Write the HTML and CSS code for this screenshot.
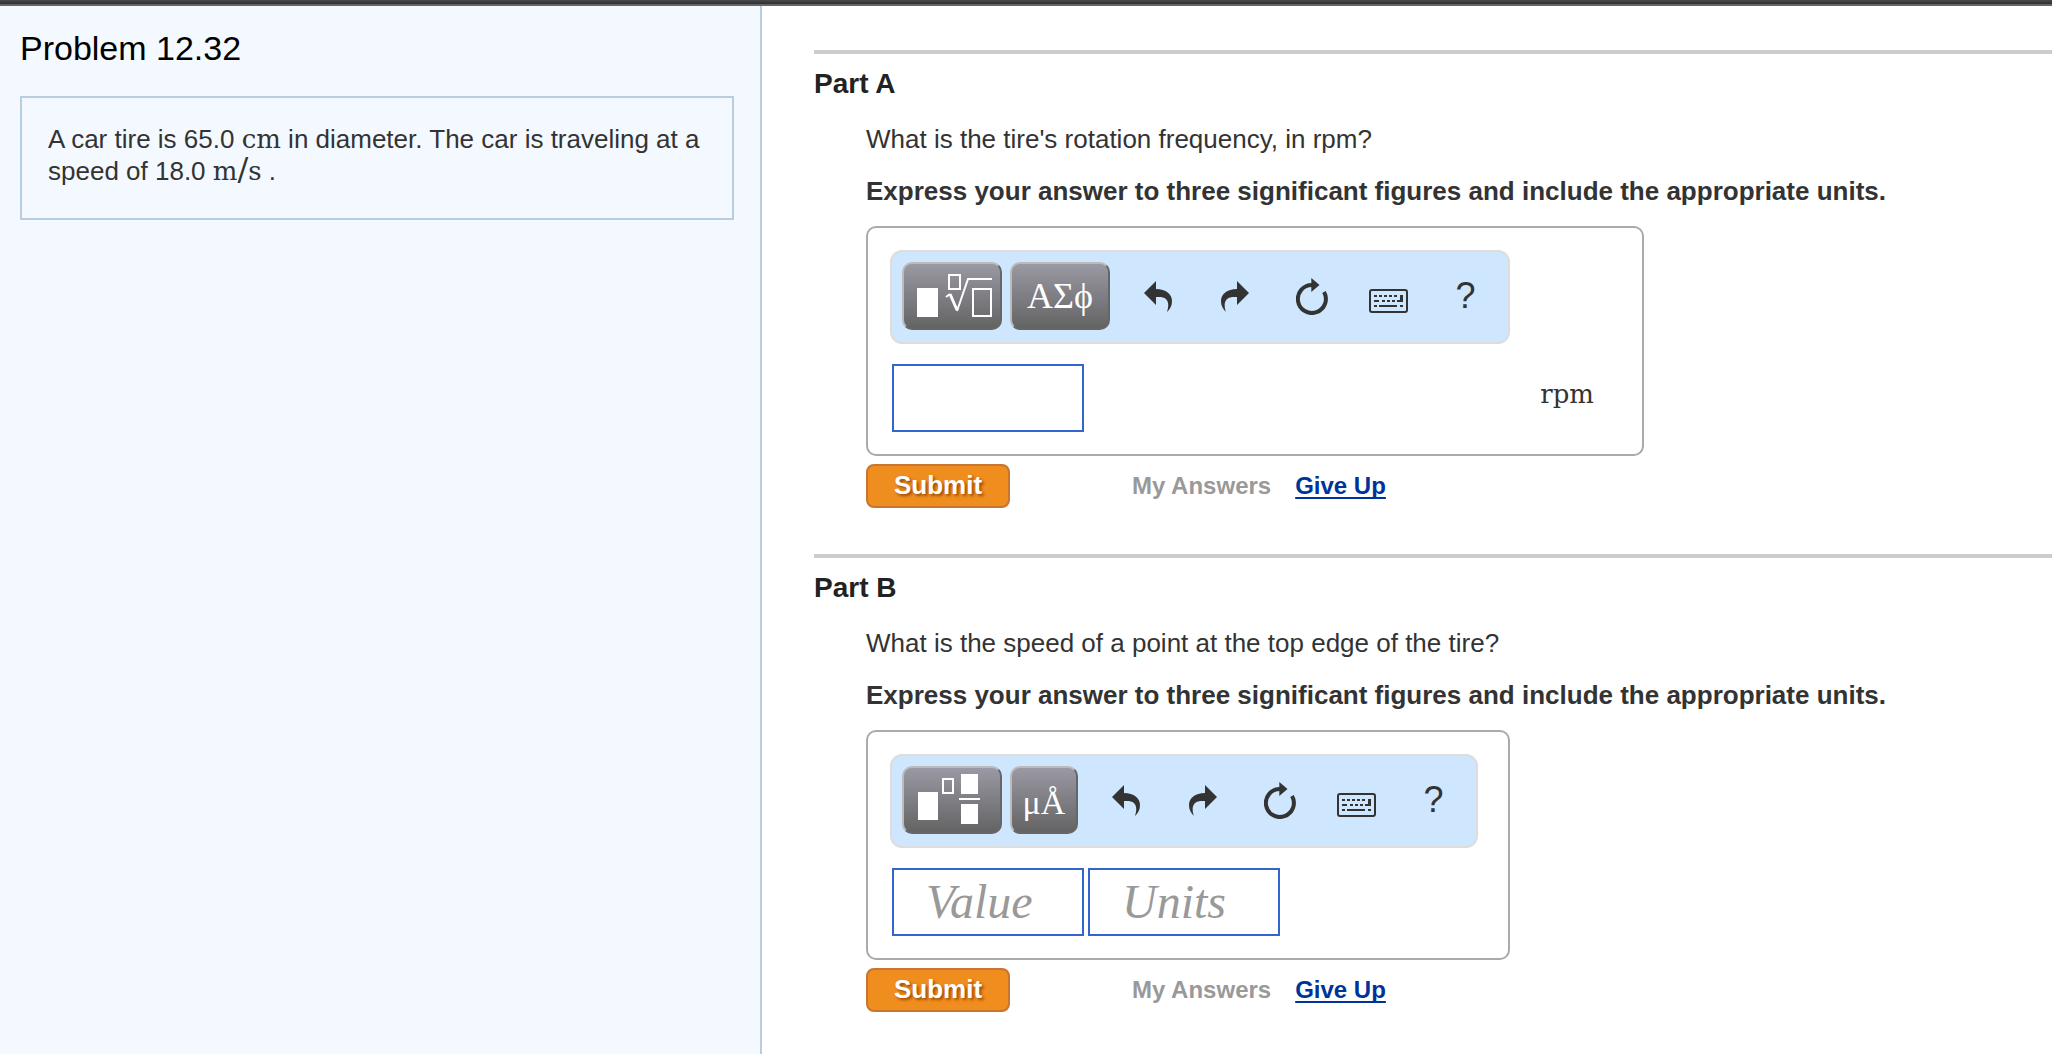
FILE: index.html
```html
<!doctype html>
<html lang="en">
<head>
    <meta charset="UTF-8">
    <meta name="viewport" content="width=device-width, initial-scale=1.0">
    <title>Problem 12.32</title>
    <link rel="stylesheet" href="styles.css">
</head>
<body>
<svg class="symbols" aria-hidden="true">
    <symbol id="undo" viewBox="0 0 28 31">
        <path d="M0 12 12 0V8C22 8 28 13 28 20C28 25 26 28 23 31C25 25 26 16 15 16H12V24Z"/>
    </symbol>
    <symbol id="redo" viewBox="0 0 28 31">
        <path d="M28 12 16 0V8C6 8 0 13 0 20C0 25 2 28 5 31C3 25 2 16 13 16H16V24Z"/>
    </symbol>
    <symbol id="reset" viewBox="0 0 32 37">
        <path d="M16 7A14 14 0 1 0 28 14" fill="none" stroke="currentColor" stroke-width="4"/>
        <path d="M15.3 0 23.5 7 15.3 14Z"/>
    </symbol>
    <symbol id="keyboard" viewBox="0 0 39 34">
        <rect x="1" y="11" width="37" height="22" rx="2" fill="none" stroke="currentColor" stroke-width="2"/>
        <path d="M5 16h3v2h-3zM10 16h3v2h-3zM15 16h3v2h-3zM20 16h3v2h-3zM25 16h3v2h-3z"/>
        <path d="M31 16h3v7h-6v-2h3zM5 21h5v2h-5zM13 21h3v2h-3zM18 21h3v2h-3zM23 21h3v2h-3z"/>
        <path d="M5 26h3v2h-3zM10 26h18v2h-18zM31 26h3v2h-3z"/>
    </symbol>
</svg>

<div class="topbar"></div>
<div class="page">
    <aside class="problem">
        <h1>Problem 12.32</h1>
        <p class="statement">A car tire is 65.0 <span class="math">cm</span> in diameter. The car is traveling at a speed of 18.0 <span class="math">m<span class="slash">/</span>s</span> .</p>
    </aside>

    <main class="parts">
        <section class="part">
            <h2>Part A</h2>
            <div class="partBody">
                <p class="question">What is the tire's rotation frequency, in rpm?</p>
                <p class="hint">Express your answer to three significant figures and include the appropriate units.</p>
                <form>
                    <div class="answer answerWide">
                        <div class="toolbar">
                            <button type="button" class="key" aria-label="Templates">
                                <svg width="96" height="64" viewBox="2 2 96 64">
                                    <rect x="15" y="26" width="21" height="29" fill="#fff"/>
                                    <g fill="none" stroke="#fff" stroke-width="2">
                                        <rect x="47" y="13" width="11" height="14"/>
                                        <path d="M44 35 48 32"/>
                                        <path d="M48 32 55 48" stroke-width="3"/>
                                        <path d="M55 49 66 17H90"/>
                                        <rect x="71" y="27" width="18" height="27"/>
                                    </g>
                                </svg>
                            </button>
                            <button type="button" class="key" aria-label="Symbols">ΑΣϕ</button>
                            <div class="tools">
                                <button type="button" class="tool" aria-label="Undo"><svg width="28" height="31"><use href="#undo"/></svg></button>
                                <button type="button" class="tool" aria-label="Redo"><svg width="28" height="31"><use href="#redo"/></svg></button>
                                <button type="button" class="tool" aria-label="Reset"><svg width="32" height="37"><use href="#reset"/></svg></button>
                                <button type="button" class="tool" aria-label="Keyboard shortcuts"><svg width="39" height="34"><use href="#keyboard"/></svg></button>
                                <button type="button" class="tool" aria-label="Help">?</button>
                            </div>
                        </div>
                        <div class="fields">
                            <input type="text" class="field" id="frequency">
                            <label class="unit" for="frequency">rpm</label>
                        </div>
                    </div>
                    <div class="actions">
                        <button type="submit" class="submit">Submit</button>
                        <a class="myAnswers" href="#">My Answers</a>
                        <a class="giveUp" href="#">Give Up</a>
                    </div>
                </form>
            </div>
        </section>

        <section class="part">
            <h2>Part B</h2>
            <div class="partBody">
                <p class="question">What is the speed of a point at the top edge of the tire?</p>
                <p class="hint">Express your answer to three significant figures and include the appropriate units.</p>
                <form>
                    <div class="answer">
                        <div class="toolbar">
                            <button type="button" class="key" aria-label="Templates">
                                <svg width="96" height="64" viewBox="2 2 96 64">
                                    <g fill="#fff">
                                        <rect x="16" y="26" width="20" height="28"/>
                                        <rect x="59" y="8" width="17" height="20"/>
                                        <rect x="57" y="32" width="21" height="2"/>
                                        <rect x="59" y="38" width="17" height="20"/>
                                    </g>
                                    <rect x="41" y="13" width="10" height="14" fill="none" stroke="#fff" stroke-width="2"/>
                                </svg>
                            </button>
                            <button type="button" class="key keySmall" aria-label="Units">μÅ</button>
                            <div class="tools">
                                <button type="button" class="tool" aria-label="Undo"><svg width="28" height="31"><use href="#undo"/></svg></button>
                                <button type="button" class="tool" aria-label="Redo"><svg width="28" height="31"><use href="#redo"/></svg></button>
                                <button type="button" class="tool" aria-label="Reset"><svg width="32" height="37"><use href="#reset"/></svg></button>
                                <button type="button" class="tool" aria-label="Keyboard shortcuts"><svg width="39" height="34"><use href="#keyboard"/></svg></button>
                                <button type="button" class="tool" aria-label="Help">?</button>
                            </div>
                        </div>
                        <div class="fields">
                            <input type="text" class="field" placeholder="Value" aria-label="Value">
                            <input type="text" class="field" placeholder="Units" aria-label="Units">
                        </div>
                    </div>
                    <div class="actions">
                        <button type="submit" class="submit">Submit</button>
                        <a class="myAnswers" href="#">My Answers</a>
                        <a class="giveUp" href="#">Give Up</a>
                    </div>
                </form>
            </div>
        </section>
    </main>
</div>
</body>
</html>
```
FILE: styles.css
```css
* {
    margin: 0;
    padding: 0;
    box-sizing: border-box;
}

body {
    display: flex;
    flex-direction: column;
    min-height: 100vh;
    font: 26px/32px "Liberation Sans", Arial, sans-serif;
    color: #333;
    background: #fff;
}

.symbols {
    display: none;
}

.topbar {
    height: 6px;
    background: linear-gradient(#4a4a4a, #303030 4px, #666 4px);
}

.page {
    flex: 1;
    display: grid;
    grid-template-columns: 762px 1fr;
}

/* left column */
.problem {
    padding: 22px 26px 22px 20px;
    background: #f4f9ff;
    border-right: 2px solid #b9cde0;
}

.problem h1 {
    margin-bottom: 28px;
    font-size: 34px;
    line-height: 40px;
    font-weight: normal;
    color: #000;
}

.statement {
    padding: 25px 26px 31px;
    border: 2px solid #b9cde0;
}

.math {
    font-family: "DejaVu Serif", serif;
    line-height: 26px;
}

.slash {
    font-size: 32px;
}

/* right column */
.parts {
    padding: 44px 0 0 52px;
}

.part {
    padding: 14px 0 46px;
    border-top: 4px solid #ccc;
}

.part:last-child {
    padding-bottom: 0;
}

.part h2 {
    font-size: 28px;
    line-height: 32px;
    color: #222;
}

.partBody {
    padding: 23px 0 0 52px;
}

.hint {
    margin: 20px 0 19px;
    font-weight: bold;
}

.answer {
    width: fit-content;
    padding: 22px 30px 22px 22px;
    border: 2px solid #aaa;
    border-radius: 10px;
}

.answerWide {
    width: 778px;
}

.toolbar {
    display: flex;
    gap: 8px;
    width: fit-content;
    padding: 10px 4px 12px 10px;
    background: #cfe6ff;
    border: 2px solid #ddd;
    border-radius: 12px;
}

.key {
    display: flex;
    align-items: center;
    justify-content: center;
    width: 100px;
    height: 68px;
    font: 36px/40px "Liberation Serif", "Times New Roman", serif;
    color: #fff;
    background: linear-gradient(#9c9aa5, #626262) border-box;
    border: 2px solid;
    border-color: #bbb #666 #666 #bbb;
    border-radius: 10px;
}

.keySmall {
    width: 68px;
    padding-top: 6px;
    font-size: 34px;
}

.tools {
    display: flex;
    margin-left: 1px;
}

.tool {
    display: flex;
    align-items: center;
    justify-content: center;
    width: 77px;
    height: 68px;
    font: 36px/40px "Liberation Sans", Arial, sans-serif;
    color: #333;
    fill: currentColor;
    background: none;
    border: 0;
}

.fields {
    display: flex;
    align-items: center;
    gap: 4px;
    margin-top: 20px;
    padding: 0 18px 0 2px;
}

.field {
    width: 192px;
    height: 68px;
    padding: 0 10px 2px 32px;
    font: italic 48px/60px "Liberation Serif", "Times New Roman", serif;
    color: #333;
    background: #fff;
    border: 2px solid #36c;
}

.field::placeholder {
    color: #999;
    opacity: 1;
}

.unit {
    margin-left: auto;
    padding-bottom: 8px;
    font: 26px/32px "DejaVu Serif", serif;
}

.actions {
    display: flex;
    align-items: center;
    margin-top: 8px;
    font-size: 24px;
    font-weight: bold;
}

.submit {
    width: 144px;
    height: 44px;
    margin-right: 122px;
    padding-bottom: 2px;
    font: bold 26px/32px "Liberation Sans", Arial, sans-serif;
    color: #fff;
    text-shadow: 2px 2px 3px #a04a00;
    background: #f08d1f;
    border: 2px solid #c87530;
    border-radius: 8px;
}

.myAnswers {
    margin-right: 24px;
    color: #999;
    text-decoration: none;
}

.giveUp {
    color: #039;
    text-decoration-thickness: 2px;
    text-underline-offset: 3px;
    text-decoration-skip-ink: none;
}
```
